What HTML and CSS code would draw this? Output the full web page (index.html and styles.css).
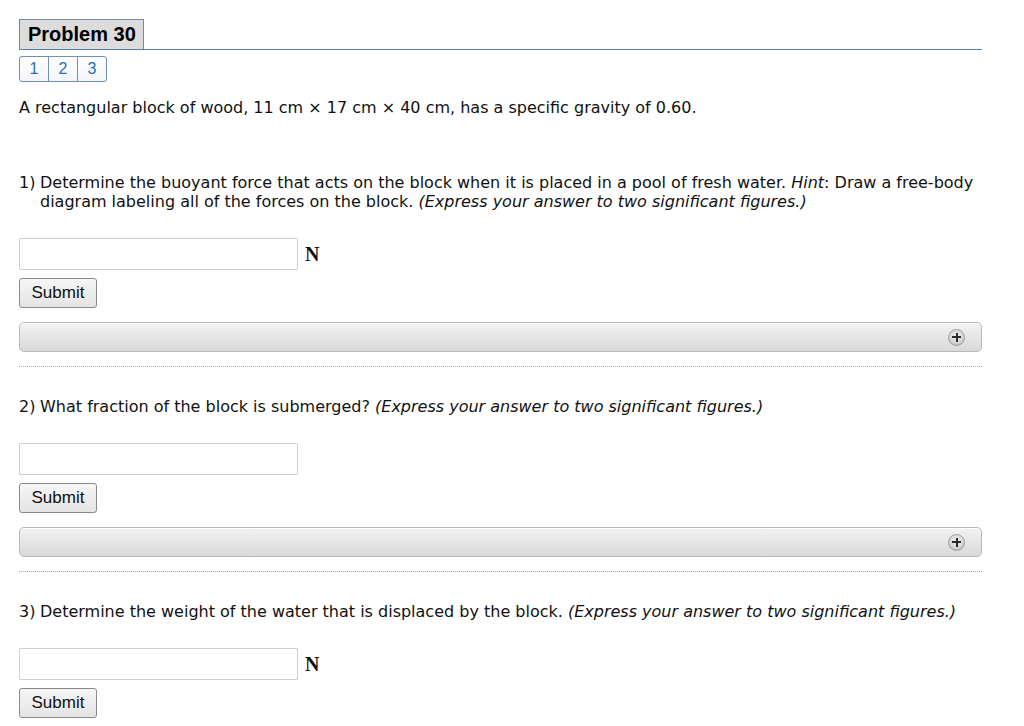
FILE: index.html
```html
<!DOCTYPE html>
<html>
<head>
<meta charset="utf-8">
<link rel="stylesheet" href="styles.css">
</head>
<body>
<div class="page">
  <div class="tabbar"><div class="tab">Problem 30</div></div>
  <div class="pager"><span class="pg">1</span><span class="pg">2</span><span class="pg">3</span></div>
  <p class="intro">A rectangular block of wood, 11 cm &times; 17 cm &times; 40 cm, has a specific gravity of 0.60.</p>

  <div class="q">
    <div class="qtext"><span class="num">1)</span><span>Determine the buoyant force that acts on the block when it is placed in a pool of fresh water. <i>Hint</i>: Draw a free-body diagram labeling all of the forces on the block. <i>(Express your answer to two significant figures.)</i></span></div>
    <div class="answer"><input class="field" type="text"><span class="unit">N</span></div>
    <button class="submit">Submit</button>
    <div class="bar"><span class="plus"></span></div>
  </div>
  <div class="sep"></div>

  <div class="q">
    <div class="qtext"><span class="num">2)</span><span>What fraction of the block is submerged? <i>(Express your answer to two significant figures.)</i></span></div>
    <div class="answer"><input class="field" type="text"></div>
    <button class="submit">Submit</button>
    <div class="bar"><span class="plus"></span></div>
  </div>
  <div class="sep"></div>

  <div class="q">
    <div class="qtext"><span class="num">3)</span><span>Determine the weight of the water that is displaced by the block. <i>(Express your answer to two significant figures.)</i></span></div>
    <div class="answer"><input class="field" type="text"><span class="unit">N</span></div>
    <button class="submit">Submit</button>
  </div>
</div>
</body>
</html>
```
FILE: styles.css
```css
html, body { margin: 0; padding: 0; background: #fff; }
body { font-family: "DejaVu Sans", sans-serif; font-size: 16px; color: #111; }
.page { width: 963px; padding: 19px 0 0 19px; }
.tabbar { border-bottom: 1px solid #5b7fae; height: 30px; display: flex; }
.tab {
  font-family: "Liberation Sans", Arial, sans-serif; font-weight: bold; font-size: 20px;
  background: #dcdcdc; border: 1px solid #6b89b0; border-bottom: none;
  padding: 0 7px 0 8px; line-height: 29px; height: 30px; box-sizing: border-box; color: #000;
}
.pager { display: flex; margin-top: 6px; }
.pg {
  width: 30px; height: 26px; box-sizing: border-box; text-align: center; line-height: 24px;
  font-family: "Liberation Sans", Arial, sans-serif; font-size: 16px; color: #2b6bbd;
  border: 1px solid #6f8fb8; background: linear-gradient(#fff, #f3f5f8);
  margin-right: -1px;
}
.pg:first-child { border-radius: 3px 0 0 3px; }
.pg:last-child { border-radius: 0 3px 3px 0; }
.intro { margin: 16px 0 0; line-height: 19px; }
.qtext { display: flex; margin-top: 56px; line-height: 19px; }
.q .num { width: 21px; flex: none; }
.qtext span:last-child { flex: 1; }
.answer { display: flex; align-items: center; margin-top: 27px; }
.field {
  width: 279px; height: 32px; box-sizing: border-box; border: 1px solid #cfcfcf; margin: 0;
  border-radius: 1px;
}
.unit { font-family: "Liberation Serif", serif; font-weight: bold; font-size: 20px; margin-left: 7px; }
.submit {
  display: block; margin-top: 8px; width: 78px; height: 30px; box-sizing: border-box;
  font-family: "Liberation Sans", Arial, sans-serif; font-size: 17px; color: #111;
  background: linear-gradient(#f6f6f6, #e4e4e4); border: 1px solid #8a8a8a; border-radius: 3px; padding: 0;
}
.bar {
  margin-top: 14px; height: 30px; box-sizing: border-box; border: 1px solid #b9b9b9; border-radius: 5px;
  background: linear-gradient(#f2f2f2, #d9d9d9); display: flex; align-items: center; justify-content: flex-end; padding-right: 16px;
  box-shadow: inset 0 1px 0 #fff;
}
.plus {
  width: 17px; height: 17px; border-radius: 50%; position: relative; box-sizing: border-box;
  background: radial-gradient(circle at 50% 40%, #f6f6f6, #cfcfcf 65%, #8f8f8f);
  border: 1px solid #a0a0a0;
}
.plus::before, .plus::after { content: ""; position: absolute; background: #2a2a2a; }
.plus::before { left: 3px; right: 3px; top: 6.5px; height: 2px; }
.plus::after { top: 3px; bottom: 3px; left: 6.5px; width: 2px; }
.sep { margin-top: 14px; border-top: 1px dotted #aaa; }
.sep + .q .qtext { margin-top: 30px; }
```
